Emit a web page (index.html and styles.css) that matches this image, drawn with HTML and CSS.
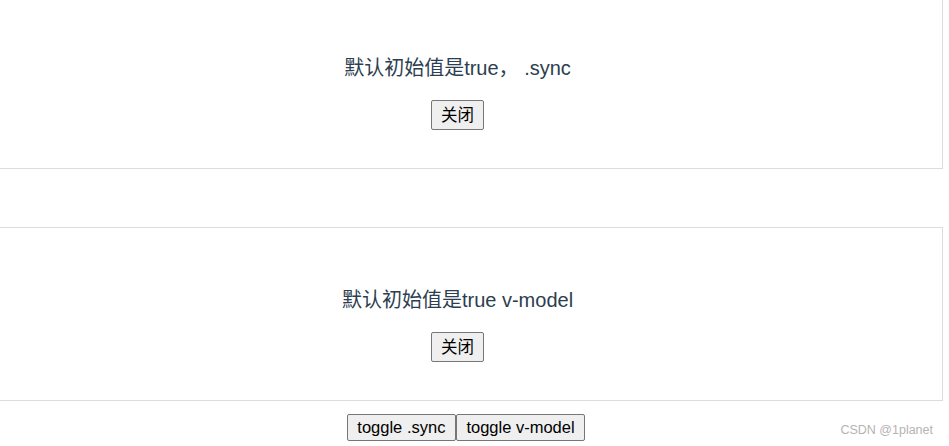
FILE: index.html
```html
<!DOCTYPE html>
<html>
  <head>
    <meta name="viewport" content="width=device-width, initial-scale=1.0">
    <title>sync / v-model demo</title>
    <link rel="stylesheet" href="styles.css">
  </head>
  <body>
    <div id="app">
      <div class="dialog">
        <p class="dialog-text">默认初始值是true， .sync</p>
        <button class="btn btn-close">关闭</button>
      </div>

      <div class="dialog dialog-second">
        <p class="dialog-text">默认初始值是true v-model</p>
        <button class="btn btn-close">关闭</button>
      </div>

      <div class="toggles"><button class="btn btn-toggle">toggle .sync</button><button class="btn btn-toggle">toggle v-model</button></div>
    </div>

    <div class="watermark">CSDN @1planet</div>
  </body>
</html>
```

FILE: styles.css
```css
body {
  margin: 0;
  padding: 0;
  overflow: hidden;
  font-family: "Liberation Sans", Arial, "Noto Sans CJK SC", sans-serif;
  color: #2c3e50;
  background: #fff;
}
#app {
  margin-top: -5px;
}
.dialog {
  box-sizing: border-box;
  width: 971px;
  height: 174px;
  margin-left: -28px;
  padding: 40px 0 39px;
  border: 1px solid #dcdcdc;
  text-align: center;
}
.dialog-second {
  margin-top: 58px;
}
.dialog-text {
  margin: 20px 0;
  font-size: 20px;
  line-height: 24px;
}
.btn {
  font-family: "Liberation Sans", Arial, "Noto Sans CJK SC", sans-serif;
  font-size: 16.5px;
  color: #000;
  background: #efefef;
  border: 1px solid #767676;
  border-radius: 2px;
  padding: 3px 9px;
  margin: 0;
  cursor: pointer;
}
.btn-close {
  line-height: 22px;
  padding: 3px 9px;
}
.btn-toggle {
  line-height: 19px;
  padding: 3px 9.5px;
}
.toggles {
  width: 932px;
  margin-top: 13px;
  text-align: center;
}
.watermark {
  position: absolute;
  right: 16px;
  bottom: 9px;
  font-size: 12.5px;
  color: #b4b4b4;
}
```
